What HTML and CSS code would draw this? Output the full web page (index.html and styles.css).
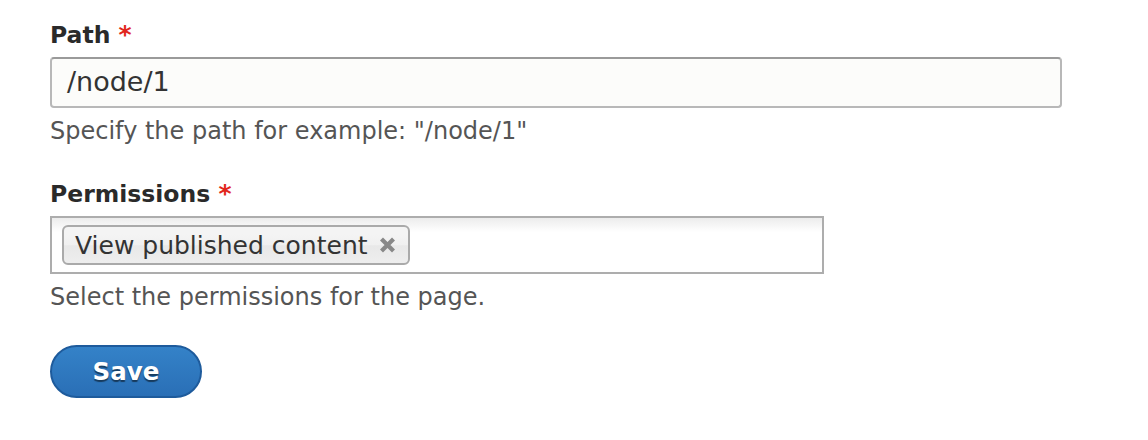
FILE: index.html
```html
<!DOCTYPE html>
<html>
<head>
<meta charset="utf-8">
<link rel="stylesheet" href="styles.css">
</head>
<body>
<form class="form">
  <div class="field">
    <label class="label">Path <span class="req">*</span></label>
    <div class="input">/node/1</div>
    <div class="desc">Specify the path for example: "/node/1"</div>
  </div>
  <div class="field">
    <label class="label">Permissions <span class="req">*</span></label>
    <div class="choices">
      <span class="tag">View published content
        <svg class="x" width="17" height="16" viewBox="0 0 17 16" aria-hidden="true">
          <path d="M2.5 2 L14.5 14 M14.5 2 L2.5 14" stroke="#888" stroke-width="4.2" stroke-linecap="butt"/>
        </svg>
      </span>
    </div>
    <div class="desc">Select the permissions for the page.</div>
  </div>
  <button class="save" type="button">Save</button>
</form>
</body>
</html>
```
FILE: styles.css
```css
html, body {
  margin: 0;
  padding: 0;
  background: #fff;
}
body {
  font-family: "DejaVu Sans", "Lucida Grande", Verdana, sans-serif;
  color: #333;
}
.form {
  padding: 20px 0 0 50px;
}
.field {
  margin-bottom: 34px;
}
.label {
  display: block;
  font-weight: bold;
  font-size: 23.5px;
  line-height: 30px;
  color: #2a2a2a;
  margin-bottom: 7px;
}
.req {
  color: #e1261c;
  font-size: 25px;
}
.input {
  box-sizing: border-box;
  width: 1012px;
  height: 51px;
  border: 2px solid #b8b8b8;
  border-top-color: #9a9a9a;
  border-radius: 4px;
  background: #fcfcfa;
  padding: 0 15px;
  font-size: 27px;
  line-height: 46px;
  color: #333;
}
.desc {
  font-size: 24px;
  line-height: 27px;
  color: #555;
  margin-top: 10px;
}
.choices {
  box-sizing: border-box;
  width: 774px;
  height: 58px;
  border: 2px solid #adadad;
  background: linear-gradient(#ececec 0, #fff 14px);
  padding: 0 10px;
  display: flex;
  align-items: center;
}
.tag {
  display: inline-flex;
  align-items: center;
  height: 40px;
  box-sizing: border-box;
  border: 2px solid #aaa;
  border-radius: 6px;
  background: linear-gradient(#f4f4f4 20%, #f0f0f0 50%, #e8e8e8 52%, #eee 100%);
  padding: 0 12px 0 11px;
  font-size: 25px;
  color: #333;
}
.x {
  display: block;
  margin-left: 11px;
}
.save {
  display: block;
  margin: 0;
  width: 152px;
  height: 53px;
  border: 2px solid #1e5b9c;
  border-radius: 27px;
  background: linear-gradient(#3482c8, #2a6fb6);
  color: #fff;
  font-family: "DejaVu Sans", "Lucida Grande", Verdana, sans-serif;
  font-weight: bold;
  font-size: 24.5px;
  text-shadow: 0 2px 1px rgba(0,0,0,0.5);
  padding: 0;
}
```
